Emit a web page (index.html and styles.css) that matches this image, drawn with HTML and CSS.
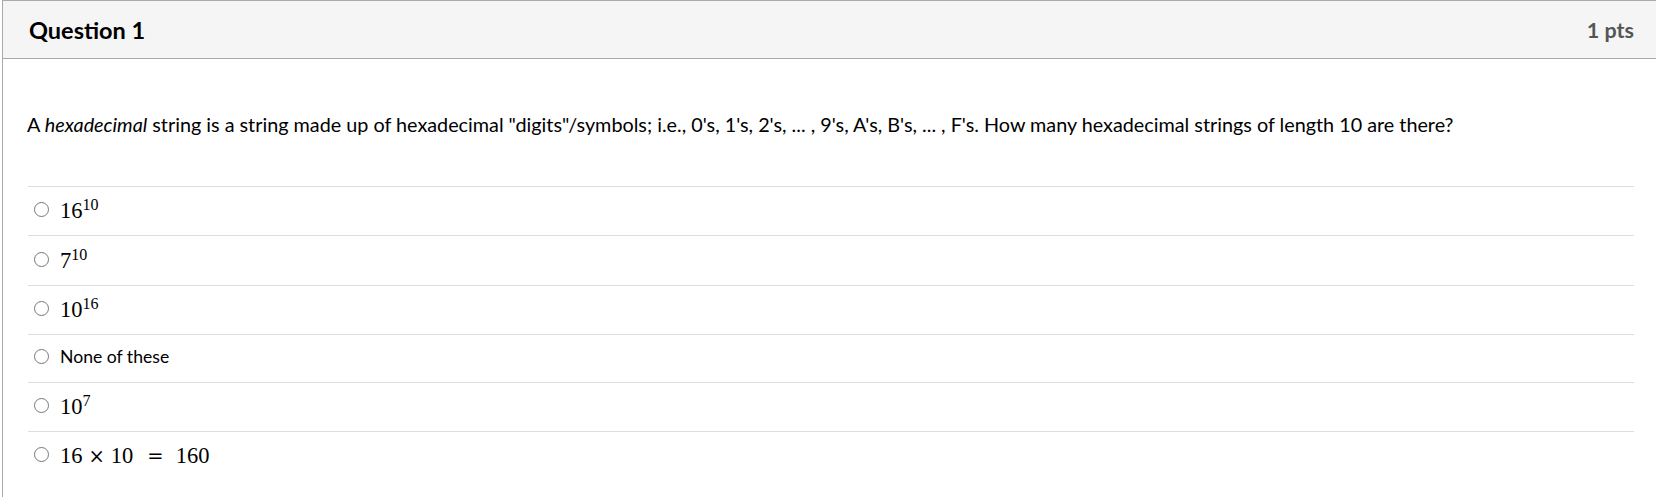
FILE: index.html
```html
<!DOCTYPE html>
<html>
<head>
<meta charset="utf-8">
<link rel="stylesheet" href="styles.css">
</head>
<body>
<div class="question">
  <div class="q-header">
    <span class="q-title">Question 1</span>
    <span class="q-pts">1 pts</span>
  </div>
  <div class="q-body">
    <p class="q-text">A <em>hexadecimal</em> string is a string made up of hexadecimal "digits"/symbols; i.e., 0's, 1's, 2's, ... , 9's, A's, B's, ... , F's. How many hexadecimal strings of length 10 are there?</p>
    <div class="answers">
      <div class="answer"><span class="radio"></span><span class="math">16<sup>10</sup></span></div>
      <div class="answer"><span class="radio"></span><span class="math">7<sup>10</sup></span></div>
      <div class="answer"><span class="radio"></span><span class="math">10<sup>16</sup></span></div>
      <div class="answer answer-text"><span class="radio"></span><span class="plain">None of these</span></div>
      <div class="answer"><span class="radio"></span><span class="math">10<sup>7</sup></span></div>
      <div class="answer"><span class="radio"></span><span class="math">16<span class="op bin">×</span>10<span class="op rel">=</span>160</span></div>
    </div>
  </div>
</div>
</body>
</html>
```
FILE: styles.css
```css
html, body {
  margin: 0;
  padding: 0;
  background: #ffffff;
}
body {
  font-family: Lato, "Open Sans", sans-serif;
  color: #2d3b45;
  height: 497px;
  overflow: hidden;
}
.question {
  margin-left: 2px;
  border-left: 1px solid #aaaaaa;
  border-top: 1px solid #aaaaaa;
  height: 496px;
}
.q-header {
  height: 57px;
  background: #f5f5f5;
  border-bottom: 1px solid #aaaaaa;
  display: flex;
  align-items: center;
  justify-content: space-between;
  padding: 0 22px 0 26px;
}
.q-title {
  font-weight: 700;
  font-size: 23.5px;
  color: #000000;
}
.q-pts {
  font-weight: 700;
  font-size: 21.5px;
  color: #555555;
}
.q-body {
  padding: 0 22px 0 24px;
}
.q-text {
  margin: 0;
  padding-top: 52px;
  font-size: 19.8px;
  line-height: 26px;
  color: #000000;
}
.answers {
  margin-top: 49px;
  margin-left: 1px;
}
.answer {
  box-sizing: border-box;
  height: 49px;
  border-top: 1px solid #dddddd;
  display: flex;
  align-items: center;
  padding-left: 6px;
}
.answer:nth-child(2) {
  height: 50px;
}
.answer-text {
  height: 48px;
  padding-bottom: 4px;
}
.radio {
  box-sizing: border-box;
  width: 15px;
  height: 15px;
  border: 1px solid #777777;
  border-radius: 50%;
  background: #ffffff;
  margin-right: 11px;
  margin-top: -3px;
  flex: none;
}
.answer-text .radio {
  margin-top: 0;
}
.math {
  font-family: "Liberation Serif", "Times New Roman", serif;
  font-size: 22.5px;
  color: #000000;
}
.math sup {
  font-size: 16px;
  vertical-align: 0;
  position: relative;
  top: -8px;
  line-height: 0;
}
.op {
  font-family: "DejaVu Serif", serif;
  font-size: 19.5px;
}
.bin {
  margin: 0 6px;
}
.rel {
  margin: 0 12px 0 14px;
}
.plain {
  font-size: 17.6px;
  color: #000000;
}
```
